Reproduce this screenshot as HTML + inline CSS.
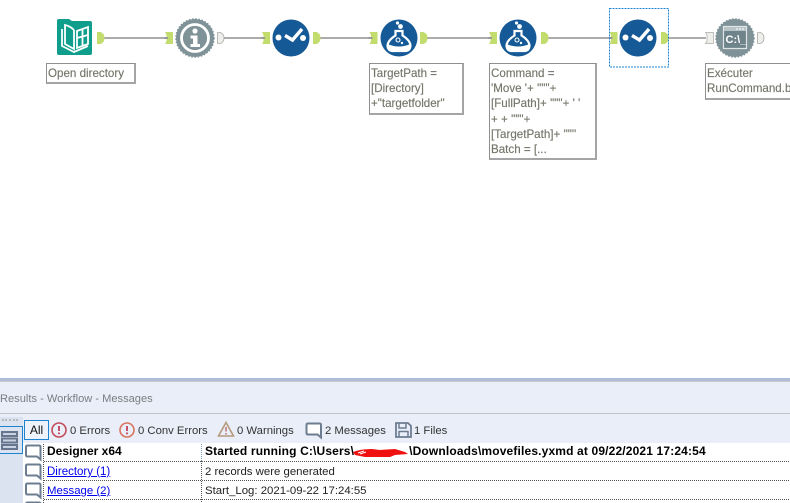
<!DOCTYPE html>
<html><head><meta charset="utf-8"><style>
html,body{margin:0;padding:0;background:#fff}
body{width:790px;height:503px;position:relative;overflow:hidden;font-family:"Liberation Sans",sans-serif}
.a{position:absolute}
.n{position:absolute;border:1px solid #8f8f8f;border-bottom:2px solid #a5a5a5;border-right:2px solid #a5a5a5;background:#fff;box-sizing:border-box;color:#75756a;font-size:11.6px;line-height:15.2px;padding:2px 0 0 1px;white-space:nowrap;overflow:hidden;-webkit-text-stroke:.15px #75756a}
.n div{height:15.2px;position:relative;top:0}
.t{position:absolute;font-size:11.4px;color:#222;white-space:nowrap;line-height:15px}
.b{font-weight:bold;color:#000;font-size:12px}
.l{color:#0000ee;text-decoration:underline}
.tb{position:absolute;top:424px;font-size:11.3px;color:#333;white-space:nowrap;line-height:15px}
</style></head><body>
<svg class="a" style="left:0;top:0" width="790" height="70" viewBox="0 0 790 70">
<defs>
<g id="in"><path d="M0-6H8V6H0L1.500 3V-3Z" fill="#c2dc6e"/><path d="M-1 0h4" stroke="#9a9a9a" stroke-width="2"/></g>
<g id="ing"><path d="M0-5.500H8V5.500H0L1.500 3V-3Z" fill="#eeeeea" stroke="#aaa" stroke-width=".7"/></g>
<g id="out"><path d="M0-6H3.500Q7.500-4.500 7.500 0T3.500 6H0Z" fill="#c2dc6e"/></g>
<g id="outg"><path d="M.5-5.500H3.500Q7-4 7 0T3.500 5.500H.5Z" fill="#eeeeea" stroke="#aaa" stroke-width=".8"/></g>
<g id="chk"><circle r="18.500" fill="#155a96"/><circle cx="-12.500" cy="-.5" r="3" fill="#fff"/><circle cx="12" cy="0" r="3" fill="#fff"/><path d="M-6-2.500L1.500 2L11-9" fill="none" stroke="#fff" stroke-width="3.400"/></g>
<g id="lab"><circle r="18.500" fill="#155a96"/><circle cx="-1.500" cy="-15" r="1.600" fill="#fff"/><circle cx="1.500" cy="-11.500" r="2.400" fill="#fff"/><path d="M-3.500-7H3.500V-2.500Q11.500 2.500 11.500 8Q11 12.500 7 13H-7Q-11 12.500-11.500 8Q-11.500 2.500-3.500-2.500Z" fill="none" stroke="#fff" stroke-width="2.200"/><path d="M-11.500 6Q0 11 11.500 6Q12 12.500 7 13.500H-7Q-12 12.500-11.500 6Z" fill="#fff"/><circle cx="-1" cy="2" r="2" fill="none" stroke="#fff" stroke-width="1.100"/><circle cx="3" cy="5" r="1.200" fill="#fff"/></g>
</defs>
<g stroke="#acacac" stroke-width="2"><path d="M103 38H166M223 38H263M320 38H371M427 38H490M548 38H610M668 38H706"/></g>
<!-- book -->
<path d="M57 21Q57 19 59 19H69L72 21H90Q92 21 92 23V53Q92 55 90 55H59Q57 55 57 53Z" fill="#0f9d8c"/>
<g fill="none" stroke="#fff" stroke-width="1.800"><path d="M74 30Q70 26 65 25V44L74 49V30"/><path d="M62 29V46L74 52L88 46"/><path d="M77 31L88 27V44L77 48ZM77 38L88 35M82.500 29V46"/></g>
<!-- info -->
<circle cx="195" cy="38" r="19" fill="#7f9298" stroke="#7f9298" stroke-width="1.500" stroke-dasharray="1.600 1.600"/>
<circle cx="195" cy="38" r="17" fill="#7f9298"/><circle cx="195" cy="38" r="13.500" fill="none" stroke="#fff" stroke-width="2.800"/>
<circle cx="195" cy="31" r="2.600" fill="#fff"/><path d="M190.500 35.500H197.500V44H200V47H190.500V44H193V38.500H190.500Z" fill="#fff"/>
<!-- run command -->
<circle cx="735" cy="38" r="19" fill="#7f9298" stroke="#7f9298" stroke-width="1.500" stroke-dasharray="1.600 1.600"/>
<circle cx="735" cy="38" r="17" fill="#7f9298"/>
<path d="M723.500 26.500H746.500V48.500H723.500Z" fill="#6f838a" stroke="#dfe5e6" stroke-width="1.200"/><path d="M724 27H746V31H724Z" fill="#b9c4c7"/><path d="M736 29H745" stroke="#fff" stroke-width="1" stroke-dasharray="2 1"/>
<text x="725.500" y="43" font-family="Liberation Sans" font-size="11" font-weight="bold" fill="#fff">C:\_</text>
<use href="#out" x="97" y="38"/><use href="#in" x="165" y="38"/>
<use href="#outg" x="217" y="38"/><use href="#in" x="262" y="38"/><use href="#chk" x="291" y="38"/>
<use href="#out" x="313" y="38"/><use href="#in" x="369.500" y="38"/><use href="#lab" x="399" y="38"/>
<use href="#out" x="420" y="38"/><use href="#in" x="489" y="38"/><use href="#lab" x="518" y="38"/>
<use href="#out" x="541" y="38"/><use href="#in" x="609.500" y="38"/><use href="#chk" x="638" y="38"/>
<use href="#out" x="661" y="38"/><use href="#ing" x="705.500" y="38"/><use href="#outg" x="757" y="38"/>
<rect x="609.500" y="8.500" width="59" height="58.500" fill="none" stroke="#1a84d0" stroke-width="1" stroke-dasharray="2 1"/>
</svg>
<div class="n" style="left:46px;top:63px;width:90px;height:21px"><div>Open directory</div></div>
<div class="n" style="left:369px;top:63px;width:95px;height:52px"><div>TargetPath =</div><div>[Directory]</div><div>+"targetfolder"</div></div>
<div class="n" style="left:489px;top:63px;width:108px;height:97px"><div>Command =</div><div>'Move '+ '""'+</div><div>[FullPath]+ '""'+ ' '</div><div>+ + '""'+</div><div>[TargetPath]+ '""'</div><div>Batch = [...</div></div>
<div class="n" style="left:705px;top:63px;width:100px;height:37px"><div>Exécuter</div><div>RunCommand.bat</div></div>

<div class="a" style="left:0;top:378px;width:790px;height:3px;background:#aebcd9"></div>
<div class="a" style="left:0;top:381px;width:790px;height:1px;background:#c9c9cc"></div>
<div class="a" style="left:0;top:382px;width:790px;height:61px;background:#e9eef8"></div>
<div class="a" style="left:0;top:413px;width:790px;height:1px;background:#c4c4c8"></div>
<div class="a" style="left:0;top:392px;font-size:11.100px;line-height:15px;color:#7c7c82;white-space:nowrap">Results - Workflow - Messages</div>
<div class="a" style="left:0;top:417px;width:23px;height:86px;background:#dbe2f0"></div>
<div class="a" style="left:0;top:426px;width:23px;height:28px;border:1px solid #1a84d0;border-left:none;box-sizing:border-box"></div>
<div class="a" style="left:2px;top:419px;width:16px;height:0;border-top:2px dotted #b9b9bd"></div>
<svg class="a" style="left:0;top:430px" width="22" height="22"><g fill="#c9d2e2" stroke="#67768c" stroke-width="2"><rect x="2" y="2" width="15" height="4"/><rect x="2" y="8.500" width="15" height="4"/><rect x="2" y="15" width="15" height="4"/></g></svg>
<div class="a" style="left:24px;top:443px;width:766px;height:60px;background:#fff"></div>
<div class="a" style="left:24px;top:420px;width:25px;height:20px;border:1px solid #1a84d0;box-sizing:border-box;background:#eef2fa;font-size:12px;color:#111;text-align:center;line-height:19px">All</div>
<svg class="a" style="left:0;top:415px" width="790" height="88" viewBox="0 415 790 88">
<defs><path id="m" d="M2.500 1.500H14Q15.500 1.500 15.500 3V15.500L12 12.500H2.500Q1 12.500 1 11V3Q1 1.500 2.500 1.500Z" fill="#fff" stroke="#6d7d91" stroke-width="2"/></defs>
<g fill="none" stroke="#c34b5b" stroke-width="1.600"><circle cx="59" cy="430" r="7"/></g><path d="M59 426V431M59 432.500V434.300" stroke="#c0344a" stroke-width="1.700"/>
<g fill="none" stroke="#d9745f" stroke-width="1.600"><circle cx="127" cy="430" r="7"/></g><path d="M127 426V431M127 432.500V434.300" stroke="#c0344a" stroke-width="1.700"/>
<path d="M226 422.500L233.500 436H218.500Z" fill="none" stroke="#b69a7c" stroke-width="1.600"/><path d="M226 427V431.500M226 433V434.500" stroke="#b0625a" stroke-width="1.300"/>
<use href="#m" x="305.500" y="422"/>
<path d="M396 423H408L411 426V437H396Z" fill="none" stroke="#6d7d91" stroke-width="1.800"/><path d="M399 423V428H406V423M399 437V431.500H408V437" fill="none" stroke="#6d7d91" stroke-width="1.500"/>
<use href="#m" x="25" y="444"/><use href="#m" x="25" y="463"/><use href="#m" x="25" y="482"/><use href="#m" x="25" y="501"/>
<g stroke="#555" stroke-width="1" stroke-dasharray="1 1"><path d="M44 461.500H790M44 480.500H790M44 499.500H790"/><path d="M43.500 444V503M201.500 461V503"/></g>
<path d="M201.500 444V461" stroke="#6f9ac0" stroke-width="1" stroke-dasharray="1 1"/>
</svg>
<div class="tb" style="left:70px">0 Errors</div>
<div class="tb" style="left:138px">0 Conv Errors</div>
<div class="tb" style="left:237px">0 Warnings</div>
<div class="tb" style="left:325px">2 Messages</div>
<div class="tb" style="left:414px">1 Files</div>
<div class="t b" style="left:47px;top:444px">Designer x64</div>
<div class="t b" style="left:205px;top:444px;letter-spacing:.15px">Started running C:\Users\<span style="display:inline-block;width:55px"></span>\Downloads\movefiles.yxmd at 09/22/2021 17:24:54</div>
<svg class="a" style="left:350px;top:444px" width="60" height="16"><path d="M3 8Q10 5 22 5L30 6L45 5L55 8L58 10L45 11L40 13L15 13L5 11Z" fill="#f01010"/><path d="M8 9L14 7M10 10L16 8" stroke="#fff" stroke-width="1"/></svg>
<div class="t l" style="left:47px;top:465px;font-size:11.500px">Directory (1)</div>
<div class="t l" style="left:47px;top:484px;font-size:11.400px">Message (2)</div>
<div class="t" style="left:205px;top:465px">2 records were generated</div>
<div class="t" style="left:205px;top:484px">Start_Log: 2021-09-22 17:24:55</div>
</body></html>
